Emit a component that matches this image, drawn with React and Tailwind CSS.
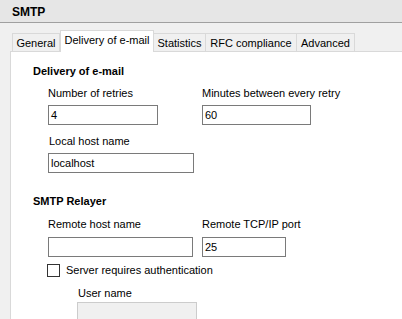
import React from "react";

const Label = ({ children, className = "" }) => (
  <div className={"h-[16px] leading-[16px] text-[11px] text-[#000] " + className}>{children}</div>
);

const Field = ({ value = "", className = "", disabled = false }) => (
  <div
    className={
      "h-[20px] border flex items-center pl-[2px] text-[11px] text-black " +
      (disabled ? "border-[#cccccc] bg-[#f0f0f0] " : "border-[#7a7a7a] bg-white ") +
      className
    }
  >
    {value}
  </div>
);

const tabs = [
  { t: "General", w: "w-[48px]" },
  { t: "Delivery of e-mail", w: "w-[94px]" },
  { t: "Statistics", w: "w-[52px]" },
  { t: "RFC compliance", w: "w-[91px]" },
  { t: "Advanced", w: "w-[58px]" },
];

export default function App() {
  return (
    <div
      className="w-[402px] h-[319px] overflow-hidden bg-[#f0f0f0] flex flex-col"
      style={{ fontFamily: '"Liberation Sans", Arial, sans-serif' }}
    >
      <div className="h-[23px] shrink-0 bg-[#e6e6e6] border-b border-[#a0a0a0] flex items-center pl-[12px] pt-[1px]">
        <span className="text-[12px] font-bold text-black">SMTP</span>
      </div>

      <div className="flex-1 flex flex-col pl-[10px] pt-[7px]">
        <div className="flex items-end pl-[2px] h-[21px] relative z-10">
          {tabs.map(({ t, w }, i) =>
            i === 1 ? (
              <div
                key={t}
                className={
                  w +
                  " h-[22px] -mb-px bg-white border border-b-0 border-[#d9d9d9] text-[11px] leading-[19px] text-center text-black"
                }
              >
                {t}
              </div>
            ) : (
              <div
                key={t}
                className={
                  w +
                  " h-[18px] bg-[#f0f0f0] border border-b-0 border-[#d9d9d9] text-[11px] leading-[18px] text-center text-black " +
                  (i > 1 ? "border-l-0" : "")
                }
              >
                {t}
              </div>
            )
          )}
        </div>

        <div className="flex-1 bg-white border-l border-t border-[#d9d9d9] pl-[22px]">
          <div className="mt-[11px] h-[16px] leading-[16px] text-[11px] font-bold text-black">Delivery of e-mail</div>

          <div className="pl-[15px] grid grid-cols-[154px_1fr] mt-[6px]">
            <div>
              <Label>Number of retries</Label>
              <Field value="4" className="w-[110px] mt-[4px]" />
            </div>
            <div>
              <Label>Minutes between every retry</Label>
              <Field value="60" className="w-[109px] mt-[4px]" />
            </div>
          </div>

          <div className="pl-[15px] mt-[8px]">
            <Label className="pl-[1px]">Local host name</Label>
            <Field value="localhost" className="w-[146px] mt-[4px]" />
          </div>

          <div className="mt-[20px] h-[16px] leading-[16px] text-[11px] font-bold text-black">SMTP Relayer</div>

          <div className="pl-[15px] grid grid-cols-[154px_1fr] mt-[7px]">
            <div>
              <Label>Remote host name</Label>
              <Field className="w-[145px] mt-[5px]" />
            </div>
            <div>
              <Label>Remote TCP/IP port</Label>
              <Field value="25" className="w-[84px] mt-[5px]" />
            </div>
          </div>

          <div className="pl-[14px] mt-[6px] flex items-center h-[14px]">
            <div className="w-[13px] h-[13px] border border-[#333333] bg-white" />
            <span className="ml-[6px] text-[11px] text-black">Server requires authentication</span>
          </div>

          <div className="pl-[44px] mt-[8px]">
            <Label className="pl-[1px]">User name</Label>
            <Field disabled className="w-[120px] mt-[1px]" />
          </div>
        </div>
      </div>
    </div>
  );
}
